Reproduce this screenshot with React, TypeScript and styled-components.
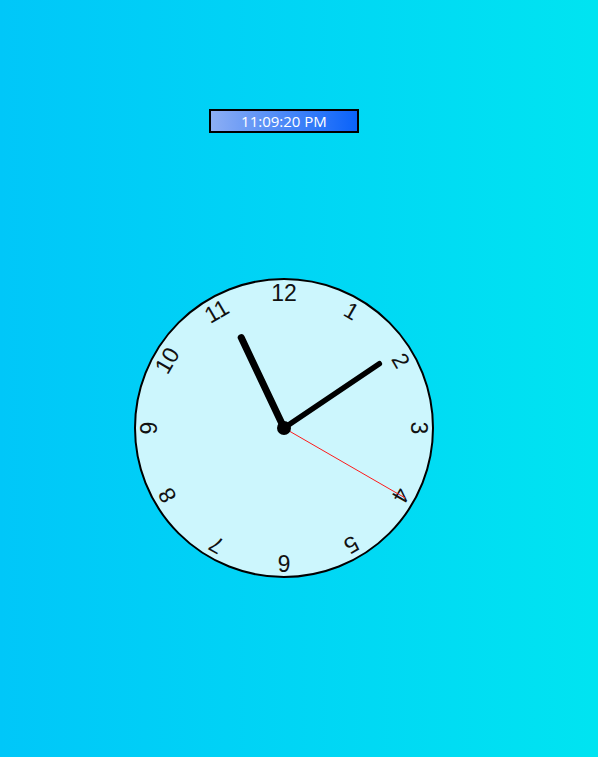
import * as React from "react";
import styled, { createGlobalStyle } from "styled-components";

const GlobalStyle = createGlobalStyle`
  html, body {
    margin: 0;
    padding: 0;
  }
  body {
    font-family: "Liberation Sans", Arial, sans-serif;
  }
`;

const Page = styled.div`
  min-height: 757px;
  background: linear-gradient(to right, #00c7f9, #00e4f1);
  display: flex;
  flex-direction: column;
  align-items: center;
  padding-top: 109px;
  padding-right: 30px;
  box-sizing: border-box;
  width: 100%;
`;

const Column = styled.div`
  width: 568px;
  display: flex;
  flex-direction: column;
  align-items: center;
`;

const Digital = styled.div`
  width: 150px;
  height: 24px;
  box-sizing: border-box;
  border: 2px solid #000;
  background: linear-gradient(to right, #8caef4, #0a63fa);
  color: #fff;
  font-family: "Open Sans", "Noto Sans", sans-serif;
  font-size: 15px;
  display: flex;
  align-items: center;
  justify-content: center;
  line-height: 1;
`;

const Face = styled.div`
  position: relative;
  margin-top: 145px;
  width: 300px;
  height: 300px;
  box-sizing: border-box;
  border: 2px solid #000;
  border-radius: 50%;
  background: #ccf6fd;
`;

const Numeral = styled.span<{ $deg: number }>`
  position: absolute;
  left: 50%;
  top: 50%;
  width: 40px;
  height: 24px;
  margin-left: -20px;
  margin-top: -12px;
  text-align: center;
  font-size: 23px;
  line-height: 24px;
  color: #111;
  transform: rotate(${(p) => p.$deg}deg) translateY(-135px);
`;

const Hands = styled.svg`
  position: absolute;
  left: -2px;
  top: -2px;
  width: 300px;
  height: 300px;
`;

function handEnd(deg: number, len: number) {
  const r = (deg * Math.PI) / 180;
  return { x: 150 + Math.sin(r) * len, y: 150 - Math.cos(r) * len };
}

export default function App() {
  const h = 11,
    m = 9,
    s = 20;
  const hourDeg = ((h % 12) + m / 60 + s / 3600) * 30;
  const minDeg = (m + s / 60) * 6;
  const secDeg = s * 6;
  const hr = handEnd(hourDeg, 100);
  const mn = handEnd(minDeg, 115);
  const sc = handEnd(secDeg, 140);

  return (
    <>
      <GlobalStyle />
      <Page>
        <Column>
          <Digital>11:09:20 PM</Digital>
          <Face>
            {Array.from({ length: 12 }, (_, i) => (
              <Numeral key={i} $deg={(i + 1) * 30}>
                {i + 1}
              </Numeral>
            ))}
            <Hands viewBox="0 0 300 300">
              <line x1="150" y1="150" x2={hr.x} y2={hr.y} stroke="#000" strokeWidth="7" strokeLinecap="round" />
              <line x1="150" y1="150" x2={mn.x} y2={mn.y} stroke="#000" strokeWidth="5.5" strokeLinecap="round" />
              <line x1="150" y1="150" x2={sc.x} y2={sc.y} stroke="#ff1a1a" strokeWidth="1" />
              <circle cx="150" cy="150" r="7" fill="#000" />
            </Hands>
          </Face>
        </Column>
      </Page>
    </>
  );
}
